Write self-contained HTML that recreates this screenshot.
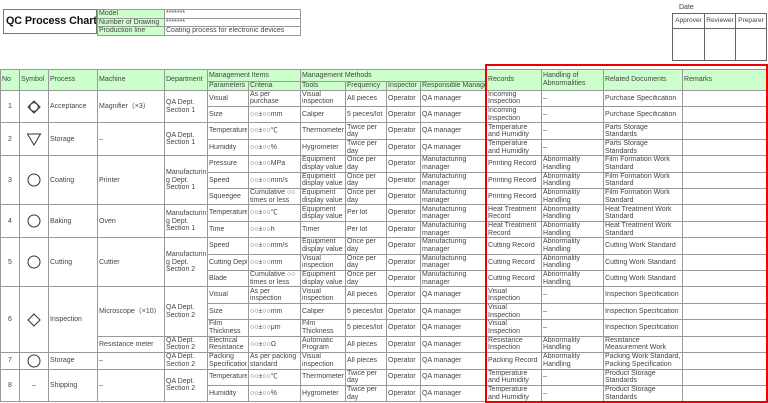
<!DOCTYPE html>
<html><head><meta charset="utf-8"><style>
*{margin:0;padding:0;box-sizing:border-box}
body{width:768px;height:403px;background:#fff;position:relative;overflow:hidden;font-family:"Liberation Sans","Noto Sans CJK JP",sans-serif;color:#444;font-size:7px}
table{border-collapse:collapse;table-layout:fixed;position:absolute}
td{border:1px solid #999;padding:0 1px;line-height:7.6px;vertical-align:middle;overflow:hidden}
td i{display:block;font-style:normal;max-height:15.2px;overflow:hidden}
.g{background:#ccffcc}
#main tr.b{height:16.42px}
#main tr.b td{height:16.42px}
#main tr.t td{border-top:1.5px solid #555}
#main td.k{border-top:1.5px solid #555}
.c{text-align:center}
.n{white-space:nowrap}
svg{display:block;margin:0 auto}
</style></head><body>
<div style="position:absolute;left:3px;top:9px;width:94px;height:25px;border:1px solid #777;font:bold 10.8px 'Liberation Sans',sans-serif;color:#111;line-height:23px;padding-left:2px;white-space:nowrap;overflow:hidden;letter-spacing:-0.1px">QC Process Chart</div>
<table style="left:97px;top:9px;width:203px">
<col style="width:67px"><col style="width:136px">
<tr style="height:8.3px"><td class="g n">Model</td><td class="n">*******</td></tr>
<tr style="height:8.3px"><td class="g n">Number of Drawing</td><td class="n">*******</td></tr>
<tr style="height:8.3px"><td class="g n">Production line</td><td class="n">Coating process for electronic devices</td></tr>
</table>
<div style="position:absolute;left:679px;top:4px;font-size:7px">Date</div>
<table style="left:672px;top:13px;width:94px;font-size:6.6px">
<col style="width:32px"><col style="width:31px"><col style="width:31px">
<tr style="height:15px"><td class="c n" style="border-color:#666;padding:0">Approver</td><td class="c n" style="border-color:#666;padding:0">Reviewer</td><td class="c n" style="border-color:#666;padding:0">Preparer</td></tr>
<tr style="height:32px"><td style="border-color:#666"></td><td style="border-color:#666"></td><td style="border-color:#666"></td></tr>
</table>

<table id="main" style="left:0;top:69px;width:766px">
<col style="width:19px"><col style="width:29px"><col style="width:49px"><col style="width:67px"><col style="width:43px"><col style="width:41px"><col style="width:52px"><col style="width:45px"><col style="width:41px"><col style="width:34px"><col style="width:66px"><col style="width:55px"><col style="width:62px"><col style="width:79px"><col style="width:84px">
<tr style="height:12px"><td class="g" rowspan="2">No</td><td class="g" rowspan="2">Symbol</td><td class="g" rowspan="2">Process</td><td class="g" rowspan="2">Machine</td><td class="g" rowspan="2">Department</td><td class="g n" colspan="2">Management Items</td><td class="g n" colspan="4">Management Methods</td><td class="g" rowspan="2">Records</td><td class="g" rowspan="2">Handling of Abnormalities</td><td class="g" rowspan="2">Related Documents</td><td class="g" rowspan="2">Remarks</td></tr>
<tr style="height:8px"><td class="g n">Parameters</td><td class="g n">Criteria</td><td class="g n">Tools</td><td class="g n">Frequency</td><td class="g n">Inspector</td><td class="g n">Responsible Manager</td></tr>

<tr class="b"><td class="c" rowspan="2">1</td><td rowspan="2"><svg width="14" height="14" viewBox="0 0 14 14"><circle cx="7" cy="7" r="4.2" fill="none" stroke="#333" stroke-width="1"/><path d="M7 1L13 7L7 13L1 7Z" fill="none" stroke="#333" stroke-width="1"/></svg></td><td rowspan="2">Acceptance</td><td rowspan="2">Magnifier（×3）</td><td rowspan="2">QA Dept. Section 1</td><td><i>Visual</i></td><td><i>As per purchase specification</i></td><td><i>Visual inspection</i></td><td><i>All pieces</i></td><td><i>Operator</i></td><td><i>QA manager</i></td><td><i>Incoming Inspection</i></td><td><i>–</i></td><td><i>Purchase Specification</i></td><td></td></tr>
<tr class="b"><td><i>Size</i></td><td><i>○○±○○mm</i></td><td><i>Caliper</i></td><td><i>5 pieces/lot</i></td><td><i>Operator</i></td><td><i>QA manager</i></td><td><i>Incoming Inspection</i></td><td><i>–</i></td><td><i>Purchase Specification</i></td><td></td></tr>

<tr class="b t"><td class="c" rowspan="2">2</td><td rowspan="2"><svg width="16" height="14" viewBox="0 0 16 14"><path d="M1.5 2H14.5L8 13Z" fill="none" stroke="#333" stroke-width="1"/></svg></td><td rowspan="2">Storage</td><td rowspan="2">–</td><td rowspan="2">QA Dept. Section 1</td><td><i>Temperature</i></td><td><i>○○±○○℃</i></td><td><i>Thermometer</i></td><td><i>Twice per day</i></td><td><i>Operator</i></td><td><i>QA manager</i></td><td><i>Temperature and Humidity</i></td><td><i>–</i></td><td><i>Parts Storage Standards</i></td><td></td></tr>
<tr class="b"><td><i>Humidity</i></td><td><i>○○±○○%</i></td><td><i>Hygrometer</i></td><td><i>Twice per day</i></td><td><i>Operator</i></td><td><i>QA manager</i></td><td><i>Temperature and Humidity</i></td><td><i>–</i></td><td><i>Parts Storage Standards</i></td><td></td></tr>

<tr class="b t"><td class="c" rowspan="3">3</td><td rowspan="3"><svg width="14" height="14" viewBox="0 0 14 14"><circle cx="7" cy="7" r="6" fill="none" stroke="#333" stroke-width="1"/></svg></td><td rowspan="3">Coating</td><td rowspan="3">Printer</td><td rowspan="3" class="n">Manufacturin<br>g Dept.<br>Section 1</td><td><i>Pressure</i></td><td><i>○○±○○MPa</i></td><td><i>Equipment display value</i></td><td><i>Once per day</i></td><td><i>Operator</i></td><td><i>Manufacturing manager</i></td><td><i>Printing Record</i></td><td><i>Abnormality Handling Standards</i></td><td><i>Film Formation Work Standard</i></td><td></td></tr>
<tr class="b"><td><i>Speed</i></td><td><i>○○±○○mm/s</i></td><td><i>Equipment display value</i></td><td><i>Once per day</i></td><td><i>Operator</i></td><td><i>Manufacturing manager</i></td><td><i>Printing Record</i></td><td><i>Abnormality Handling Standards</i></td><td><i>Film Formation Work Standard</i></td><td></td></tr>
<tr class="b"><td><i>Squeegee</i></td><td><i>Cumulative ○○ times or less</i></td><td><i>Equipment display value</i></td><td><i>Once per day</i></td><td><i>Operator</i></td><td><i>Manufacturing manager</i></td><td><i>Printing Record</i></td><td><i>Abnormality Handling Standards</i></td><td><i>Film Formation Work Standard</i></td><td></td></tr>

<tr class="b t"><td class="c" rowspan="2">4</td><td rowspan="2"><svg width="14" height="14" viewBox="0 0 14 14"><circle cx="7" cy="7" r="6" fill="none" stroke="#333" stroke-width="1"/></svg></td><td rowspan="2">Baking</td><td rowspan="2">Oven</td><td rowspan="2" class="n">Manufacturin<br>g Dept.<br>Section 1</td><td><i>Temperature</i></td><td><i>○○±○○℃</i></td><td><i>Equipment display value</i></td><td><i>Per lot</i></td><td><i>Operator</i></td><td><i>Manufacturing manager</i></td><td><i>Heat Treatment Record</i></td><td><i>Abnormality Handling Standards</i></td><td><i>Heat Treatment Work Standard</i></td><td></td></tr>
<tr class="b"><td><i>Time</i></td><td><i>○○±○○h</i></td><td><i>Timer</i></td><td><i>Per lot</i></td><td><i>Operator</i></td><td><i>Manufacturing manager</i></td><td><i>Heat Treatment Record</i></td><td><i>Abnormality Handling Standards</i></td><td><i>Heat Treatment Work Standard</i></td><td></td></tr>

<tr class="b t"><td class="c" rowspan="3">5</td><td rowspan="3"><svg width="14" height="14" viewBox="0 0 14 14"><circle cx="7" cy="7" r="6" fill="none" stroke="#333" stroke-width="1"/></svg></td><td rowspan="3">Cutting</td><td rowspan="3">Cuttier</td><td rowspan="3" class="n">Manufacturin<br>g Dept.<br>Section 2</td><td><i>Speed</i></td><td><i>○○±○○mm/s</i></td><td><i>Equipment display value</i></td><td><i>Once per day</i></td><td><i>Operator</i></td><td><i>Manufacturing manager</i></td><td><i>Cutting Record</i></td><td><i>Abnormality Handling Standards</i></td><td><i>Cutting Work Standard</i></td><td></td></tr>
<tr class="b"><td class="n"><i>Cutting Depth</i></td><td><i>○○±○○mm</i></td><td><i>Visual inspection</i></td><td><i>Once per day</i></td><td><i>Operator</i></td><td><i>Manufacturing manager</i></td><td><i>Cutting Record</i></td><td><i>Abnormality Handling Standards</i></td><td><i>Cutting Work Standard</i></td><td></td></tr>
<tr class="b"><td><i>Blade</i></td><td><i>Cumulative ○○ times or less</i></td><td><i>Equipment display value</i></td><td><i>Once per day</i></td><td><i>Operator</i></td><td><i>Manufacturing manager</i></td><td><i>Cutting Record</i></td><td><i>Abnormality Handling Standards</i></td><td><i>Cutting Work Standard</i></td><td></td></tr>

<tr class="b t"><td class="c" rowspan="4">6</td><td rowspan="4"><svg width="14" height="14" viewBox="0 0 14 14"><path d="M7 1L13 7L7 13L1 7Z" fill="none" stroke="#333" stroke-width="1"/></svg></td><td rowspan="4">Inspection</td><td rowspan="3">Microscope（×10）</td><td rowspan="3">QA Dept. Section 2</td><td><i>Visual</i></td><td><i>As per inspection</i></td><td><i>Visual inspection</i></td><td><i>All pieces</i></td><td><i>Operator</i></td><td><i>QA manager</i></td><td><i>Visual Inspection Record</i></td><td><i>–</i></td><td><i>Inspection Specification</i></td><td></td></tr>
<tr class="b"><td><i>Size</i></td><td><i>○○±○○mm</i></td><td><i>Caliper</i></td><td><i>5 pieces/lot</i></td><td><i>Operator</i></td><td><i>QA manager</i></td><td><i>Visual Inspection Record</i></td><td><i>–</i></td><td><i>Inspection Specification</i></td><td></td></tr>
<tr class="b"><td><i>Film Thickness</i></td><td><i>○○±○○μm</i></td><td><i>Film Thickness</i></td><td><i>5 pieces/lot</i></td><td><i>Operator</i></td><td><i>QA manager</i></td><td><i>Visual Inspection Record</i></td><td><i>–</i></td><td><i>Inspection Specification</i></td><td></td></tr>
<tr class="b"><td class="k"><i>Resistance meter</i></td><td class="k"><i>QA Dept. Section 2</i></td><td class="k"><i>Electrical Resistance</i></td><td class="k"><i>○○±○○Ω</i></td><td class="k"><i>Automatic Program</i></td><td class="k"><i>All pieces</i></td><td class="k"><i>Operator</i></td><td class="k"><i>QA manager</i></td><td class="k"><i>Resistance Inspection</i></td><td class="k"><i>Abnormality Handling Standards</i></td><td class="k"><i>Resistance Measurement Work Standard</i></td><td class="k"></td></tr>

<tr class="b t"><td class="c">7</td><td><svg width="14" height="14" viewBox="0 0 14 14"><circle cx="7" cy="7" r="6" fill="none" stroke="#333" stroke-width="1"/></svg></td><td><i>Storage</i></td><td><i>–</i></td><td><i>QA Dept. Section 2</i></td><td><i>Packing Specification</i></td><td><i>As per packing standard</i></td><td><i>Visual inspection</i></td><td><i>All pieces</i></td><td><i>Operator</i></td><td><i>QA manager</i></td><td><i>Packing Record</i></td><td><i>Abnormality Handling Standards</i></td><td><i>Packing Work Standard, Packing Specification</i></td><td></td></tr>

<tr class="b t"><td class="c" rowspan="2">8</td><td class="c" rowspan="2">–</td><td rowspan="2">Shipping</td><td rowspan="2">–</td><td rowspan="2">QA Dept. Section 2</td><td><i>Temperature</i></td><td><i>○○±○○℃</i></td><td><i>Thermometer</i></td><td><i>Twice per day</i></td><td><i>Operator</i></td><td><i>QA manager</i></td><td><i>Temperature and Humidity</i></td><td><i>–</i></td><td><i>Product Storage Standards</i></td><td></td></tr>
<tr class="b"><td><i>Humidity</i></td><td><i>○○±○○%</i></td><td><i>Hygrometer</i></td><td><i>Twice per day</i></td><td><i>Operator</i></td><td><i>QA manager</i></td><td><i>Temperature and Humidity</i></td><td><i>–</i></td><td><i>Product Storage Standards</i></td><td></td></tr>
</table>
<div style="position:absolute;left:485px;top:64px;width:283px;height:339px;border:2.5px solid #ee0000"></div>
</body></html>
